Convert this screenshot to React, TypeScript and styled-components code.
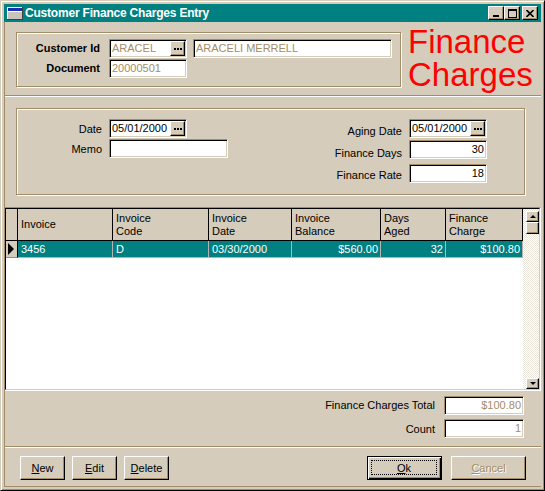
import styled, { createGlobalStyle } from "styled-components";

const FACE = "#d5ccbb";
const SHADOW = "#a28d68";
const TEAL = "#008080";
const FONT = `"Liberation Sans", Arial, sans-serif`;

type Column = {
  key: keyof InvoiceRow;
  title: string[];
  width: number;
  align?: "left" | "right";
};

type InvoiceRow = {
  invoice: string;
  code: string;
  date: string;
  balance: string;
  days: string;
  charge: string;
};

const columns: Column[] = [
  { key: "invoice", title: ["Invoice"], width: 95 },
  { key: "code", title: ["Invoice", "Code"], width: 96 },
  { key: "date", title: ["Invoice", "Date"], width: 83 },
  { key: "balance", title: ["Invoice", "Balance"], width: 89, align: "right" },
  { key: "days", title: ["Days", "Aged"], width: 65, align: "right" },
  { key: "charge", title: ["Finance", "Charge"], width: 77, align: "right" },
];

const rows: InvoiceRow[] = [
  {
    invoice: "3456",
    code: "D",
    date: "03/30/2000",
    balance: "$560.00",
    days: "32",
    charge: "$100.80",
  },
];

const GlobalStyle = createGlobalStyle`
  html, body {
    margin: 0;
    padding: 0;
    background: ${FACE};
  }
  body {
    font-family: ${FONT};
    font-size: 11px;
    color: #000;
  }
  * {
    box-sizing: border-box;
  }
`;

const Window = styled.div`
  width: 545px;
  height: 491px;
  display: flex;
  flex-direction: column;
  padding: 3px;
  background: ${FACE};
  border: 1px solid;
  border-color: ${FACE} #000 #000 ${FACE};
  box-shadow: inset 1px 1px 0 #fff, inset -1px -1px 0 ${SHADOW};
`;

const TitleBar = styled.div`
  height: 18px;
  flex: none;
  display: flex;
  align-items: center;
  padding: 0 3px;
  background: ${TEAL};
`;

const TitleText = styled.span`
  margin-left: 2px;
  color: #fff;
  font-weight: bold;
  font-size: 12px;
  letter-spacing: -0.2px;
  white-space: nowrap;
`;

const CaptionButtons = styled.div`
  margin-left: auto;
  display: flex;
`;

const Raised = `
  background: ${FACE};
  border: 1px solid;
  border-color: #fff #000 #000 #fff;
  box-shadow: inset -1px -1px 0 ${SHADOW};
`;

const CaptionButton = styled.div<{ $gap?: number }>`
  width: 16px;
  height: 14px;
  margin-left: ${({ $gap }) => $gap ?? 0}px;
  display: flex;
  align-items: center;
  justify-content: center;
  ${Raised}
`;

const Client = styled.div`
  flex: 1;
  display: flex;
  flex-direction: column;
  border-left: 1px solid ${SHADOW};
`;

const TopPanel = styled.div`
  height: 74px;
  flex: none;
  display: flex;
  align-items: flex-start;
  padding-left: 11px;
  border-bottom: 1px solid ${SHADOW};
`;

const EtchedBox = styled.div<{ $w: number; $h: number }>`
  width: ${({ $w }) => $w}px;
  height: ${({ $h }) => $h}px;
  flex: none;
  border: 1px solid ${SHADOW};
  box-shadow: inset 1px 1px 0 #fff, 1px 1px 0 #fff;
`;

const CustomerGroup = styled(EtchedBox)`
  margin-top: 10px;
  padding-top: 6px;
  display: flex;
  flex-direction: column;
  gap: 1px;
`;

const FieldRow = styled.div<{ $mt?: number }>`
  display: flex;
  align-items: flex-start;
  margin-top: ${({ $mt }) => $mt ?? 0}px;
`;

const FieldLabel = styled.span<{
  $w?: number;
  $bold?: boolean;
  $dy?: number;
  $gap: number;
}>`
  ${({ $w }) => ($w ? `width: ${$w}px;` : "")}
  flex: none;
  text-align: right;
  line-height: 19px;
  margin-top: ${({ $dy }) => $dy ?? 0}px;
  margin-bottom: ${({ $dy }) => -($dy ?? 0)}px;
  margin-right: ${({ $gap }) => $gap}px;
  font-weight: ${({ $bold }) => ($bold ? "bold" : "normal")};
  white-space: nowrap;
`;

const Edit = styled.div<{ $w: number; $disabled?: boolean; $gap?: number }>`
  width: ${({ $w }) => $w}px;
  height: 19px;
  flex: none;
  margin-right: ${({ $gap }) => $gap ?? 0}px;
  display: flex;
  align-items: flex-start;
  padding: 1px;
  background: #fff;
  border: 1px solid;
  border-color: ${SHADOW} #fff #fff ${SHADOW};
  box-shadow: inset 1px 1px 0 #000, inset -1px -1px 0 ${FACE};
  color: ${({ $disabled }) => ($disabled ? SHADOW : "#000")};
`;

const EditValue = styled.span<{ $right?: boolean }>`
  flex: 1;
  min-width: 0;
  padding: 0 1px;
  line-height: 15px;
  white-space: nowrap;
  overflow: hidden;
  text-align: ${({ $right }) => ($right ? "right" : "left")};
`;

const EllipsisButton = styled.div`
  width: 15px;
  height: 15px;
  flex: none;
  display: flex;
  justify-content: center;
  padding-top: 6px;
  ${Raised}
`;

const BigTitle = styled.div`
  margin: 3px 0 0 7px;
  color: #ff0000;
  font-family: ${FONT};
  font-size: 33px;
  white-space: nowrap;
`;

const BigTitleLine = styled.div`
  height: 33px;
  line-height: 33px;
`;

const MiddlePanel = styled.div`
  height: 351px;
  flex: none;
  display: flex;
  flex-direction: column;
  border-top: 1px solid #fff;
  border-bottom: 1px solid ${SHADOW};
`;

const FilterGroup = styled(EtchedBox)`
  margin: 11px 0 0 11px;
  display: flex;
  justify-content: space-between;
  padding: 10px 37px 0 0;
`;

const FieldColumn = styled.div<{ $end?: boolean }>`
  display: flex;
  flex-direction: column;
  align-items: ${({ $end }) => ($end ? "flex-end" : "flex-start")};
`;

const Grid = styled.div`
  margin-top: 12px;
  height: 184px;
  flex: none;
  display: flex;
  border-top: 1px solid ${SHADOW};
  border-right: 1px solid #fff;
  border-bottom: 1px solid #fff;
`;

const GridInner = styled.div`
  flex: 1;
  display: flex;
  background: #fff;
  border: 1px solid;
  border-color: #000 ${FACE} ${FACE} #000;
`;

const DataArea = styled.div`
  width: 517px;
  flex: none;
  display: flex;
  flex-direction: column;
`;

const HeaderRow = styled.div`
  height: 32px;
  display: flex;
  border-bottom: 1px solid #000;
`;

const IndicatorCell = styled.div<{ $row?: boolean }>`
  width: 12px;
  flex: none;
  background: ${FACE};
  border-right: 1px solid #000;
  ${({ $row }) => ($row ? `border-bottom: 1px solid ${SHADOW};` : "")}
`;

const HeaderCell = styled.div<{ $w: number }>`
  width: ${({ $w }) => $w}px;
  flex: none;
  display: flex;
  flex-direction: column;
  justify-content: center;
  padding: 0 3px;
  background: ${FACE};
  border-right: 1px solid #000;
  line-height: 13px;
  white-space: nowrap;
`;

const DataRow = styled.div`
  height: 17px;
  display: flex;
`;

const DataCell = styled.div<{ $w: number; $align?: "left" | "right" }>`
  width: ${({ $w }) => $w}px;
  flex: none;
  padding: 0 2px 0 3px;
  background: ${TEAL};
  color: #fff;
  border-right: 1px solid #b4b4b4;
  border-bottom: 1px solid #b4b4b4;
  line-height: 16px;
  text-align: ${({ $align }) => $align ?? "left"};
  white-space: nowrap;
`;

const Scrollbar = styled.div`
  width: 16px;
  flex: none;
  display: flex;
  flex-direction: column;
  padding: 2px 0 0 3px;
  background: repeating-conic-gradient(#fff 0 25%, #ebe6dc 0 50%) 0 0 / 2px 2px;
`;

const ScrollButton = styled.div<{ $h: number }>`
  width: 13px;
  height: ${({ $h }) => $h}px;
  flex: none;
  display: flex;
  align-items: center;
  justify-content: center;
  ${Raised}
`;

const ScrollSpacer = styled.div`
  flex: 1;
`;

const Totals = styled.div`
  margin-top: 5px;
  padding-right: 17px;
  display: flex;
  flex-direction: column;
  align-items: flex-end;
  gap: 4px;
`;

const ButtonBar = styled.div`
  height: 40px;
  flex: none;
  display: flex;
  align-items: flex-start;
  padding: 8px 15px 0;
  border-top: 1px solid #fff;
  border-bottom: 1px solid ${SHADOW};
`;

const ButtonGroup = styled.div<{ $gap: number; $push?: boolean }>`
  display: flex;
  gap: ${({ $gap }) => $gap}px;
  ${({ $push }) => ($push ? "margin-left: auto;" : "")}
`;

const PushButton = styled.div<{ $w: number; $disabled?: boolean }>`
  width: ${({ $w }) => $w}px;
  height: 24px;
  display: flex;
  align-items: center;
  justify-content: center;
  ${Raised}
  color: ${({ $disabled }) => ($disabled ? SHADOW : "#000")};
  text-shadow: ${({ $disabled }) => ($disabled ? "1px 1px 0 #fff" : "none")};
`;

const DefaultButton = styled(PushButton)`
  display: flex;
  align-items: stretch;
  border: 1px solid #000;
  box-shadow: inset 1px 1px 0 #fff, inset -1px -1px 0 #000,
    inset -2px -2px 0 ${SHADOW};
`;

const FocusRing = styled.span`
  flex: 1;
  margin: 3px 4px 4px 3px;
  display: flex;
  align-items: center;
  justify-content: center;
  border: 1px dotted #000;
`;

const Dots = () => (
  <svg width="8" height="2" viewBox="0 0 8 2">
    <rect x="0" y="0" width="2" height="2" fill="#000" />
    <rect x="3" y="0" width="2" height="2" fill="#000" />
    <rect x="6" y="0" width="2" height="2" fill="#000" />
  </svg>
);

const LookupEdit = ({ value, disabled }: { value: string; disabled?: boolean }) => (
  <Edit $w={78} $disabled={disabled}>
    <EditValue>{value}</EditValue>
    <EllipsisButton>
      <Dots />
    </EllipsisButton>
  </Edit>
);

const Key = ({ text }: { text: string }) => (
  <span>
    <u>{text[0]}</u>
    {text.slice(1)}
  </span>
);

export default function App() {
  return (
    <>
      <GlobalStyle />
      <Window>
        <TitleBar>
          <svg width="16" height="13" viewBox="0 0 16 13">
            <rect x="0" y="0" width="16" height="13" fill="#404040" />
            <rect x="0" y="0" width="15" height="12" fill="#fff" />
            <rect x="1" y="1" width="14" height="11" fill="#c8c4bc" />
            <rect x="1" y="1" width="14" height="3" fill="#1c2fb0" />
            <rect x="1" y="4" width="14" height="1" fill="#fff" />
          </svg>
          <TitleText>Customer Finance Charges Entry</TitleText>
          <CaptionButtons>
            <CaptionButton>
              <svg width="8" height="8" viewBox="0 0 8 8">
                <rect x="1" y="6" width="6" height="2" fill="#000" />
              </svg>
            </CaptionButton>
            <CaptionButton>
              <svg width="9" height="9" viewBox="0 0 9 9">
                <rect x="0.5" y="0.5" width="8" height="8" fill="none" stroke="#000" />
                <rect x="0" y="1" width="9" height="1" fill="#000" />
              </svg>
            </CaptionButton>
            <CaptionButton $gap={2}>
              <svg width="8" height="7" viewBox="0 0 8 7">
                <path d="M0.5 0 L7.5 7 M7.5 0 L0.5 7" stroke="#000" strokeWidth="1.6" />
              </svg>
            </CaptionButton>
          </CaptionButtons>
        </TitleBar>

        <Client>
          <TopPanel>
            <CustomerGroup $w={385} $h={55}>
              <FieldRow>
                <FieldLabel $w={83} $gap={9} $bold>
                  Customer Id
                </FieldLabel>
                <Edit $w={78} $disabled $gap={6}>
                  <EditValue>ARACEL</EditValue>
                  <EllipsisButton>
                    <Dots />
                  </EllipsisButton>
                </Edit>
                <Edit $w={199} $disabled>
                  <EditValue>ARACELI MERRELL</EditValue>
                </Edit>
              </FieldRow>
              <FieldRow>
                <FieldLabel $w={83} $gap={9} $bold>
                  Document
                </FieldLabel>
                <Edit $w={78} $disabled>
                  <EditValue>20000501</EditValue>
                </Edit>
              </FieldRow>
            </CustomerGroup>
            <BigTitle>
              <BigTitleLine>Finance</BigTitleLine>
              <BigTitleLine>Charges</BigTitleLine>
            </BigTitle>
          </TopPanel>

          <MiddlePanel>
            <FilterGroup $w={509} $h={87}>
              <FieldColumn>
                <FieldRow>
                  <FieldLabel $w={85} $gap={7} $dy={1}>
                    Date
                  </FieldLabel>
                  <LookupEdit value="05/01/2000" />
                </FieldRow>
                <FieldRow $mt={1}>
                  <FieldLabel $w={85} $gap={7} $dy={1}>
                    Memo
                  </FieldLabel>
                  <Edit $w={119}>
                    <EditValue />
                  </Edit>
                </FieldRow>
              </FieldColumn>
              <FieldColumn $end>
                <FieldRow>
                  <FieldLabel $gap={7} $dy={3}>
                    Aging Date
                  </FieldLabel>
                  <LookupEdit value="05/01/2000" />
                </FieldRow>
                <FieldRow $mt={2}>
                  <FieldLabel $gap={7} $dy={4}>
                    Finance Days
                  </FieldLabel>
                  <Edit $w={78}>
                    <EditValue $right>30</EditValue>
                  </Edit>
                </FieldRow>
                <FieldRow $mt={5}>
                  <FieldLabel $gap={7} $dy={2}>
                    Finance Rate
                  </FieldLabel>
                  <Edit $w={78}>
                    <EditValue $right>18</EditValue>
                  </Edit>
                </FieldRow>
              </FieldColumn>
            </FilterGroup>

            <Grid>
              <GridInner>
                <DataArea>
                  <HeaderRow>
                    <IndicatorCell />
                    {columns.map((col) => (
                      <HeaderCell key={col.key} $w={col.width}>
                        {col.title.map((line) => (
                          <span key={line}>{line}</span>
                        ))}
                      </HeaderCell>
                    ))}
                  </HeaderRow>
                  {rows.map((row) => (
                    <DataRow key={row.invoice}>
                      <IndicatorCell $row>
                        <svg width="11" height="16" viewBox="0 0 11 16">
                          <polygon points="2,2 8,8 2,14" fill="#000" />
                        </svg>
                      </IndicatorCell>
                      {columns.map((col) => (
                        <DataCell key={col.key} $w={col.width} $align={col.align}>
                          {row[col.key]}
                        </DataCell>
                      ))}
                    </DataRow>
                  ))}
                </DataArea>
                <Scrollbar>
                  <ScrollButton $h={11}>
                    <svg width="6" height="3" viewBox="0 0 6 3">
                      <polygon points="0,3 3,0 6,3" fill="#000" />
                    </svg>
                  </ScrollButton>
                  <ScrollButton $h={12} />
                  <ScrollSpacer />
                  <ScrollButton $h={11}>
                    <svg width="6" height="3" viewBox="0 0 6 3">
                      <polygon points="0,0 6,0 3,3" fill="#000" />
                    </svg>
                  </ScrollButton>
                </Scrollbar>
              </GridInner>
            </Grid>

            <Totals>
              <FieldRow>
                <FieldLabel $gap={9}>Finance Charges Total</FieldLabel>
                <Edit $w={80} $disabled>
                  <EditValue $right>$100.80</EditValue>
                </Edit>
              </FieldRow>
              <FieldRow>
                <FieldLabel $gap={9} $dy={1}>
                  Count
                </FieldLabel>
                <Edit $w={80} $disabled>
                  <EditValue $right>1</EditValue>
                </Edit>
              </FieldRow>
            </Totals>
          </MiddlePanel>

          <ButtonBar>
            <ButtonGroup $gap={7}>
              <PushButton $w={45}>
                <Key text="New" />
              </PushButton>
              <PushButton $w={45}>
                <Key text="Edit" />
              </PushButton>
              <PushButton $w={45}>
                <Key text="Delete" />
              </PushButton>
            </ButtonGroup>
            <ButtonGroup $gap={9} $push>
              <DefaultButton $w={75}>
                <FocusRing>
                  <Key text="Ok" />
                </FocusRing>
              </DefaultButton>
              <PushButton $w={75} $disabled>
                <Key text="Cancel" />
              </PushButton>
            </ButtonGroup>
          </ButtonBar>
        </Client>
      </Window>
    </>
  );
}
